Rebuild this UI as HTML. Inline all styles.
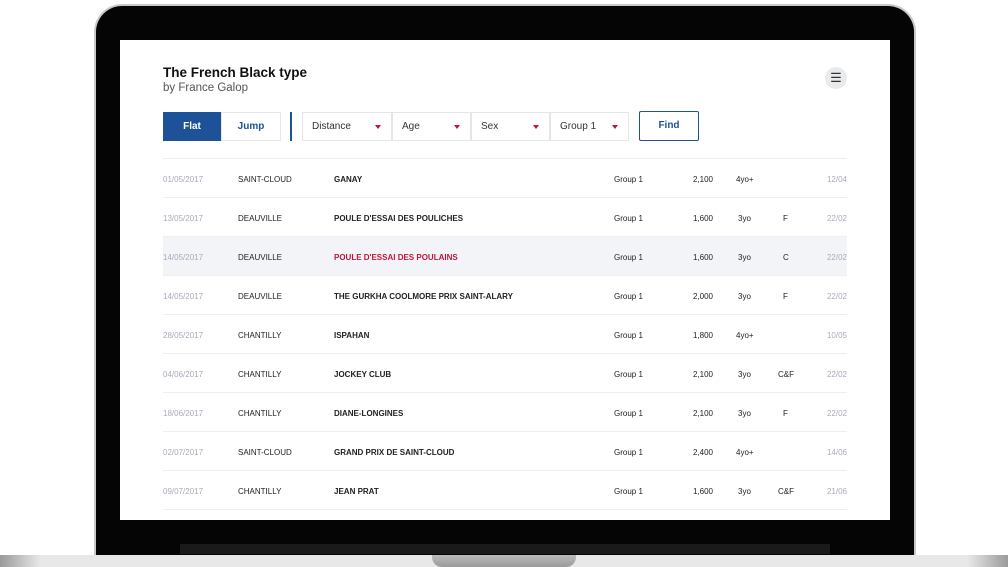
<!DOCTYPE html>
<html><head><meta charset="utf-8"><style>
*{margin:0;padding:0;box-sizing:border-box}
body{width:1008px;height:567px;background:#fff;position:relative;overflow:hidden;font-family:"Liberation Sans",sans-serif}
.bezel{position:absolute;left:94px;top:4px;width:822px;height:560px;background:#050505;border-radius:28px 28px 0 0;border:2px solid #c9c9c9;border-bottom:none}
.screen{position:absolute;left:120px;top:40px;width:770px;height:480px;background:#fff;overflow:hidden}
.base{position:absolute;left:0;top:555px;width:1008px;height:12px;background:linear-gradient(#e4e4e4,#bdbdbd);}
.base:before{content:"";position:absolute;left:0;top:0;width:100%;height:100%;background:linear-gradient(90deg,#9a9a9a,#e8e8e8 4%,#e8e8e8 96%,#9a9a9a)}
.notch{position:absolute;left:432px;top:555px;width:144px;height:12px;background:linear-gradient(#bbb,#9a9a9a);border-radius:0 0 10px 10px}
.lip{position:absolute;left:180px;top:544px;width:650px;height:10px;background:#1a1a1a}
.t{position:absolute;left:43px;top:25px;font-size:13.5px;font-weight:bold;color:#111}
.s{position:absolute;left:43px;top:42px;font-size:11.5px;color:#555}
.menu{position:absolute;left:705px;top:27px;width:22px;height:22px;border-radius:50%;background:#e9eaec;font-size:13px;text-align:center;line-height:22px;color:#333}
.flat{position:absolute;left:43px;top:72px;width:58px;height:29px;background:#1d5299;color:#fff;font-size:10px;font-weight:bold;text-align:center;line-height:29px}
.jump{position:absolute;left:101px;top:72px;width:60px;height:29px;border:1px solid #e6e6e6;color:#1d5299;font-size:10px;font-weight:bold;text-align:center;line-height:27px}
.vbar{position:absolute;left:170px;top:72px;width:2px;height:29px;background:#1d5299}
.dd{position:absolute;top:72px;height:29px;border:1px solid #e6e6e6;font-size:10px;color:#333;line-height:27px;padding-left:9px}
.dd i{position:absolute;right:10px;top:12px;border-left:3px solid transparent;border-right:3px solid transparent;border-top:4px solid #c0163a}
.find{position:absolute;left:519px;top:71px;width:60px;height:30px;border:1.5px solid #1d5299;border-radius:2px;color:#1d5299;font-size:10px;font-weight:bold;text-align:center;line-height:27px}
.row{position:absolute;left:43px;width:684px;height:39px;border-top:1px solid #eceef0;font-size:8px;color:#222}
.row span{position:absolute;top:16px}
.hl{background:#f3f4f7}
</style></head><body>
<div class="bezel"></div>
<div class="lip"></div>
<div class="base"></div><div class="notch"></div>
<div class="screen">
<div class="t">The French Black type</div>
<div class="s">by France Galop</div>
<div class="menu">☰</div>
<div class="flat">Flat</div><div class="jump">Jump</div>
<div class="vbar"></div>
<div class="dd" style="left:182px;width:90px">Distance<i></i></div>
<div class="dd" style="left:272px;width:79px">Age<i></i></div>
<div class="dd" style="left:351px;width:79px">Sex<i></i></div>
<div class="dd" style="left:430px;width:79px">Group 1<i></i></div>
<div class="find">Find</div>
<div class="row" style="top:118px"><span style="left:0;color:#aab">01/05/2017</span><span style="left:75px">SAINT-CLOUD</span><span style="left:171px;font-weight:bold">GANAY</span><span style="left:451px">Group 1</span><span style="right:134px">2,100</span><span style="left:573px">4yo+</span><span style="right:0;color:#aab">12/04</span></div>
<div class="row" style="top:157px"><span style="left:0;color:#aab">13/05/2017</span><span style="left:75px">DEAUVILLE</span><span style="left:171px;font-weight:bold">POULE D'ESSAI DES POULICHES</span><span style="left:451px">Group 1</span><span style="right:134px">1,600</span><span style="left:575px">3yo</span><span style="left:620px">F</span><span style="right:0;color:#aab">22/02</span></div>
<div class="row hl" style="top:196px"><span style="left:0;color:#aab">14/05/2017</span><span style="left:75px">DEAUVILLE</span><span style="left:171px;font-weight:bold;color:#c0163a">POULE D'ESSAI DES POULAINS</span><span style="left:451px">Group 1</span><span style="right:134px">1,600</span><span style="left:575px">3yo</span><span style="left:620px">C</span><span style="right:0;color:#aab">22/02</span></div>
<div class="row" style="top:235px"><span style="left:0;color:#aab">14/05/2017</span><span style="left:75px">DEAUVILLE</span><span style="left:171px;font-weight:bold">THE GURKHA COOLMORE PRIX SAINT-ALARY</span><span style="left:451px">Group 1</span><span style="right:134px">2,000</span><span style="left:575px">3yo</span><span style="left:620px">F</span><span style="right:0;color:#aab">22/02</span></div>
<div class="row" style="top:274px"><span style="left:0;color:#aab">28/05/2017</span><span style="left:75px">CHANTILLY</span><span style="left:171px;font-weight:bold">ISPAHAN</span><span style="left:451px">Group 1</span><span style="right:134px">1,800</span><span style="left:573px">4yo+</span><span style="right:0;color:#aab">10/05</span></div>
<div class="row" style="top:313px"><span style="left:0;color:#aab">04/06/2017</span><span style="left:75px">CHANTILLY</span><span style="left:171px;font-weight:bold">JOCKEY CLUB</span><span style="left:451px">Group 1</span><span style="right:134px">2,100</span><span style="left:575px">3yo</span><span style="left:615px">C&amp;F</span><span style="right:0;color:#aab">22/02</span></div>
<div class="row" style="top:352px"><span style="left:0;color:#aab">18/06/2017</span><span style="left:75px">CHANTILLY</span><span style="left:171px;font-weight:bold">DIANE-LONGINES</span><span style="left:451px">Group 1</span><span style="right:134px">2,100</span><span style="left:575px">3yo</span><span style="left:620px">F</span><span style="right:0;color:#aab">22/02</span></div>
<div class="row" style="top:391px"><span style="left:0;color:#aab">02/07/2017</span><span style="left:75px">SAINT-CLOUD</span><span style="left:171px;font-weight:bold">GRAND PRIX DE SAINT-CLOUD</span><span style="left:451px">Group 1</span><span style="right:134px">2,400</span><span style="left:573px">4yo+</span><span style="right:0;color:#aab">14/06</span></div>
<div class="row" style="top:430px"><span style="left:0;color:#aab">09/07/2017</span><span style="left:75px">CHANTILLY</span><span style="left:171px;font-weight:bold">JEAN PRAT</span><span style="left:451px">Group 1</span><span style="right:134px">1,600</span><span style="left:575px">3yo</span><span style="left:615px">C&amp;F</span><span style="right:0;color:#aab">21/06</span></div>
<div class="row" style="top:469px"></div>
</div>
</body></html>
